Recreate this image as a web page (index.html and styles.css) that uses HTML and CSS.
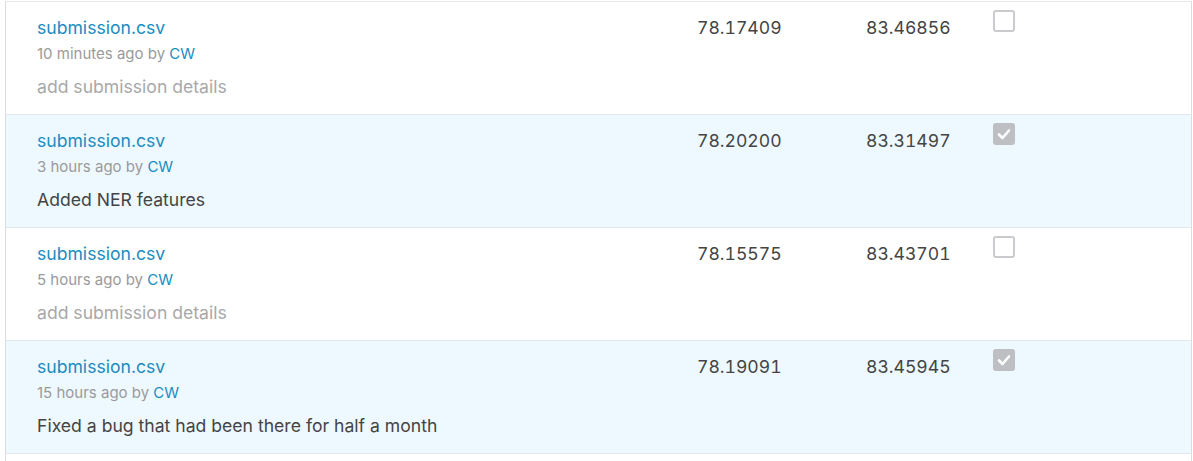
FILE: index.html
```html
<!DOCTYPE html>
<html>
<head>
<meta charset="utf-8">
<link rel="stylesheet" href="styles.css">
</head>
<body>
<div class="list">
  <div class="row">
    <div class="info">
      <a class="file">submission.csv</a>
      <div class="meta">10 minutes ago by <a class="user">CW</a></div>
      <div class="desc placeholder">add submission details</div>
    </div>
    <div class="score">78.17409</div>
    <div class="score">83.46856</div>
    <div class="check"><span class="box"></span></div>
  </div>
  <div class="row alt">
    <div class="info">
      <a class="file">submission.csv</a>
      <div class="meta">3 hours ago by <a class="user">CW</a></div>
      <div class="desc">Added NER features</div>
    </div>
    <div class="score">78.20200</div>
    <div class="score">83.31497</div>
    <div class="check"><span class="box checked"><svg viewBox="0 0 22 22" width="22" height="22"><path d="M6 11.5 L9.5 15 L16 7.5" fill="none" stroke="#fff" stroke-width="2.6" stroke-linecap="round" stroke-linejoin="round"/></svg></span></div>
  </div>
  <div class="row">
    <div class="info">
      <a class="file">submission.csv</a>
      <div class="meta">5 hours ago by <a class="user">CW</a></div>
      <div class="desc placeholder">add submission details</div>
    </div>
    <div class="score">78.15575</div>
    <div class="score">83.43701</div>
    <div class="check"><span class="box"></span></div>
  </div>
  <div class="row alt">
    <div class="info">
      <a class="file">submission.csv</a>
      <div class="meta">15 hours ago by <a class="user">CW</a></div>
      <div class="desc">Fixed a bug that had been there for half a month</div>
    </div>
    <div class="score">78.19091</div>
    <div class="score">83.45945</div>
    <div class="check"><span class="box checked"><svg viewBox="0 0 22 22" width="22" height="22"><path d="M6 11.5 L9.5 15 L16 7.5" fill="none" stroke="#fff" stroke-width="2.6" stroke-linecap="round" stroke-linejoin="round"/></svg></span></div>
  </div>
</div>
</body>
</html>
```

FILE: styles.css
```css
html, body {
  margin: 0;
  padding: 0;
  background: #fff;
}
body {
  font-family: Inter, "Noto Sans", sans-serif;
  color: #444;
}
.list {
  margin: 1px 1px 0 5px;
  padding-bottom: 12px;
  border-left: 1px solid #dcdcdc;
  border-right: 1px solid #dcdcdc;
  border-top: 1px solid #e6eaee;
}
.row {
  display: grid;
  grid-template-columns: 660px 169px 127px 1fr;
  padding: 8px 0 16px 31px;
  border-bottom: 1px solid #e1e8ee;
  background: #fff;
}
.row.alt {
  background: #eef8ff;
}
.info {
  padding-top: 7px;
  display: flex;
  flex-direction: column;
  align-items: flex-start;
}
.file {
  font-size: 17.6px;
  line-height: 22px;
  color: #1a8cbf;
  text-decoration: none;
}
.meta {
  margin-top: 5px;
  font-size: 15px;
  line-height: 20px;
  color: #9a9a9a;
}
.user {
  color: #1a8cbf;
  text-decoration: none;
}
.desc {
  margin-top: 12px;
  font-size: 17.6px;
  line-height: 22px;
  color: #444;
}
.desc.placeholder {
  color: #a8a8a8;
}
.score {
  padding-top: 7px;
  font-size: 17.6px;
  line-height: 22px;
  color: #444;
  font-variant-numeric: tabular-nums;
}
.box {
  display: block;
  box-sizing: border-box;
  width: 22px;
  height: 22px;
  border: 2px solid #c9cbce;
  border-radius: 3px;
  background: #fff;
}
.box.checked {
  border: none;
  background: #bdbfc3;
}
.box svg {
  display: block;
}
```
